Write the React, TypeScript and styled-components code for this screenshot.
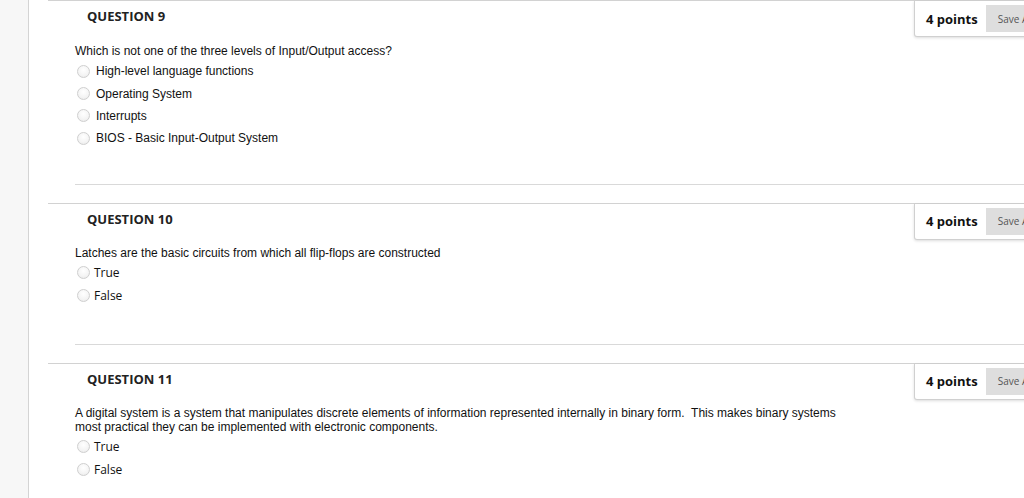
import React from "react";
import styled, { createGlobalStyle } from "styled-components";

const Global = createGlobalStyle`
  html, body { margin: 0; padding: 0; background: #fff; overflow: hidden; }
  body { width: 1024px; height: 498px; }
`;

const Page = styled.div`
  display: flex;
  width: 1024px;
  height: 498px;
  overflow: hidden;
`;

const Sidebar = styled.div`
  width: 28px;
  flex: none;
  background: #f7f7f7;
  border-right: 1px solid #d4d4d4;
`;

const Main = styled.div`
  flex: 1;
  min-width: 0;
  padding-left: 19px;
`;

const Block = styled.section`
  border-top: 1px solid #d2d2d2;
`;

const HeaderRow = styled.div`
  display: flex;
  justify-content: space-between;
  align-items: flex-start;
`;

const Title = styled.h3`
  margin: 0;
  padding: 6px 0 0 39px;
  font-family: "Open Sans", sans-serif;
  font-weight: 700;
  font-size: 13px;
  line-height: 18px;
  color: #222;
`;

const PointsBox = styled.div`
  display: flex;
  align-items: center;
  flex: none;
  height: 36px;
  width: 160px;
  margin-right: -50px;
  padding-left: 11px;
  box-sizing: border-box;
  border: 1px solid #d0d0d0;
  border-top: none;
  border-radius: 0 0 3px 3px;
  box-shadow: 0 1px 3px rgba(0, 0, 0, 0.14);
  background: #fff;
`;

const Points = styled.span`
  font-family: "Open Sans", sans-serif;
  font-weight: 700;
  font-size: 13px;
  color: #111;
`;

const SaveButton = styled.button`
  margin-left: 8px;
  height: 27px;
  padding: 0 12px;
  border: none;
  background: #dedede;
  font-family: "Open Sans", sans-serif;
  font-size: 10px;
  color: #555;
  white-space: nowrap;
`;

const Body = styled.div<{ $pad: number }>`
  padding: ${(p) => p.$pad}px 0 0 27px;
`;

const Prompt = styled.p<{ $mb: number }>`
  margin: 0 0 ${(p) => p.$mb}px 0;
  max-width: 790px;
  font-family: "Liberation Sans", Arial, sans-serif;
  font-size: 12px;
  line-height: 14px;
  color: #111;
`;

const Option = styled.label<{ $h: number }>`
  display: flex;
  align-items: center;
  height: ${(p) => p.$h}px;
  padding-left: 2px;
`;

const Radio = styled.span`
  width: 11px;
  height: 11px;
  border-radius: 50%;
  border: 1px solid #cfcfcf;
  background: radial-gradient(circle at 50% 35%, #ffffff 0%, #f4f4f4 60%, #e6e6e6 100%);
  flex: none;
`;

const OptionText = styled.span<{ $sans?: boolean }>`
  margin-left: ${(p) => (p.$sans ? "4px" : "6px")};
  font-family: ${(p) => (p.$sans ? '"Open Sans", sans-serif' : '"Liberation Sans", Arial, sans-serif')};
  font-size: 12px;
  color: #111;
`;

const Divider = styled.div<{ $gap: number }>`
  margin: ${(p) => p.$gap}px 0 18px 27px;
  border-top: 1px solid #d9d9d9;
`;

type Q = {
  n: number;
  prompt: React.ReactNode;
  options: string[];
  sans?: boolean;
  rowH: number;
  pad: number;
  mb: number;
  gap: number;
};

const questions: Q[] = [
  {
    n: 9,
    prompt: "Which is not one of the three levels of Input/Output access?",
    options: [
      "High-level language functions",
      "Operating System",
      "Interrupts",
      "BIOS - Basic Input-Output System",
    ],
    rowH: 22.4,
    pad: 7,
    mb: 2,
    gap: 34,
  },
  {
    n: 10,
    prompt: "Latches are the basic circuits from which all flip-flops are constructed",
    options: ["True", "False"],
    sans: true,
    rowH: 23,
    pad: 6,
    mb: 1,
    gap: 37,
  },
  {
    n: 11,
    prompt: (
      <>
        A digital system is a system that manipulates discrete elements of information represented
        internally in binary form.&nbsp; This makes binary systems most practical they can be
        implemented with electronic components.
      </>
    ),
    options: ["True", "False"],
    sans: true,
    rowH: 23,
    pad: 6,
    mb: 1,
    gap: 37,
  },
];

export default function App() {
  return (
    <>
      <Global />
      <Page>
        <Sidebar />
        <Main>
          {questions.map((q) => (
            <div key={q.n}>
              <Block>
                <HeaderRow>
                  <Title>QUESTION {q.n}</Title>
                  <PointsBox>
                    <Points>4 points</Points>
                    <SaveButton>Save Answer</SaveButton>
                  </PointsBox>
                </HeaderRow>
                <Body $pad={q.pad}>
                  <Prompt $mb={q.mb}>{q.prompt}</Prompt>
                  {q.options.map((o) => (
                    <Option key={o} $h={q.rowH}>
                      <Radio />
                      <OptionText $sans={q.sans}>{o}</OptionText>
                    </Option>
                  ))}
                </Body>
              </Block>
              <Divider $gap={q.gap} />
            </div>
          ))}
        </Main>
      </Page>
    </>
  );
}
